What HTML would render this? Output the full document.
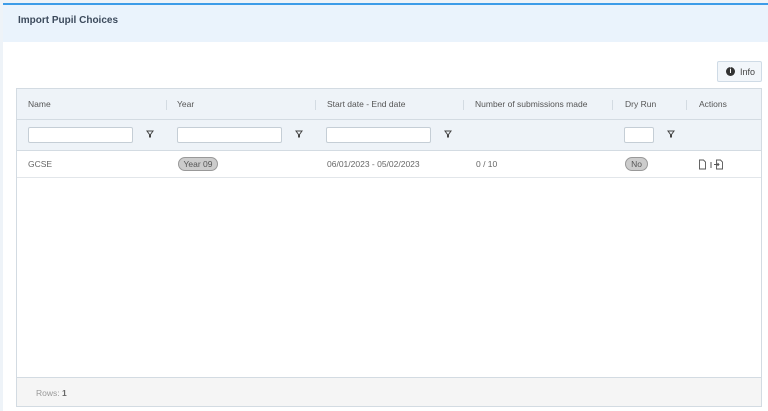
<!DOCTYPE html>
<html><head><style>
*{box-sizing:border-box;margin:0;padding:0}
body{width:768px;height:411px;background:#eef3f8;font-family:"Liberation Sans",sans-serif;position:relative;overflow:hidden}
.card{position:absolute;left:3px;top:3px;right:0;bottom:0;background:#fff;border-top:2px solid #3d9ce8}
.hd{height:37px;background:#eaf3fc;padding:10px 0 0 15px;font-size:10px;font-weight:bold;color:#3c4a5c}
.info{position:absolute;left:717px;top:61px;width:45px;height:21px;border:1px solid #cfdbe6;background:#f2f6fa;border-radius:2px;font-size:9px;color:#444;padding:5px 0 0 8px;line-height:10px}
.info b{display:inline-block;width:9px;height:9px;border-radius:50%;background:#333;color:#fff;font-size:7px;text-align:center;line-height:9px;margin-right:5px;vertical-align:top}
.tbl{position:absolute;left:16px;top:88px;width:746px;height:319px;border:1px solid #d3dbe2}
.th{position:absolute;left:0;top:0;width:100%;height:31px;background:#eef3f8;border-bottom:1px solid #d3dbe2}
.fr{position:absolute;left:0;top:31px;width:100%;height:31px;background:#eef3f8;border-bottom:1px solid #d3dbe2}
.row{position:absolute;left:0;top:62px;width:100%;height:27px;border-bottom:1px solid #e2e6ea}
.ft{position:absolute;left:0;bottom:0;width:100%;height:29px;background:#f5f5f5;border-top:1px solid #d3dbe2;font-size:8.5px;color:#999;padding:10px 0 0 19px}
.t{position:absolute;font-size:8.5px;color:#555}
.sep{position:absolute;top:11px;width:1px;height:10px;background:#d3dbe2}
.in{position:absolute;top:7px;height:16px;background:#fff;border:1px solid #c5ced6;border-radius:2px}
.fi{position:absolute;top:10px;font-size:8px;color:#555}
.pill{position:absolute;background:#ccc;border:1px solid #999;border-radius:8px;font-size:8.5px;color:#555;text-align:center;height:14px;line-height:12px}
</style></head><body>
<div class="card"><div class="hd">Import Pupil Choices</div></div>
<div class="info"><b>i</b>Info</div>
<div class="tbl">
<div class="th">
<div class="t" style="left:11px;top:10px">Name</div>
<div class="sep" style="left:149px"></div><div class="t" style="left:160px;top:10px">Year</div>
<div class="sep" style="left:298px"></div><div class="t" style="left:310px;top:10px">Start date - End date</div>
<div class="sep" style="left:446px"></div><div class="t" style="left:458px;top:10px">Number of submissions made</div>
<div class="sep" style="left:595px"></div><div class="t" style="left:608px;top:10px">Dry Run</div>
<div class="sep" style="left:669px"></div><div class="t" style="left:682px;top:10px">Actions</div>
<div class="sep" style="left:744px"></div>
</div>
<div class="fr">
<div class="in" style="left:11px;width:105px"></div><svg class="fi" style="left:129px" width="8" height="8" viewBox="0 0 8 8"><path d="M1 1h6L4.5 4.5V7H3.5V4.5z" fill="none" stroke="#444" stroke-width="1"/></svg>
<div class="in" style="left:160px;width:105px"></div><svg class="fi" style="left:278px" width="8" height="8" viewBox="0 0 8 8"><path d="M1 1h6L4.5 4.5V7H3.5V4.5z" fill="none" stroke="#444" stroke-width="1"/></svg>
<div class="in" style="left:309px;width:105px"></div><svg class="fi" style="left:427px" width="8" height="8" viewBox="0 0 8 8"><path d="M1 1h6L4.5 4.5V7H3.5V4.5z" fill="none" stroke="#444" stroke-width="1"/></svg>
<div class="in" style="left:607px;width:30px"></div><svg class="fi" style="left:650px" width="8" height="8" viewBox="0 0 8 8"><path d="M1 1h6L4.5 4.5V7H3.5V4.5z" fill="none" stroke="#444" stroke-width="1"/></svg>
</div>
<div class="row">
<div class="t" style="left:11px;top:8px;color:#666">GCSE</div>
<div class="pill" style="left:161px;top:6px;width:40px">Year 09</div>
<div class="t" style="left:310px;top:8px;color:#666">06/01/2023 - 05/02/2023</div>
<div class="t" style="left:459px;top:8px;color:#666">0 / 10</div>
<div class="pill" style="left:608px;top:6px;width:23px">No</div>
<svg style="position:absolute;left:681px;top:8px" width="30" height="11" viewBox="0 0 30 11"><path d="M1.5 1h4l2 2v7h-6z" fill="none" stroke="#555" stroke-width="0.9"/><path d="M13 3v6" stroke="#555" stroke-width="1"/><path d="M18.5 1h4l2 2v7h-6z M16 5.5h5 M19.5 4l1.5 1.5-1.5 1.5" fill="none" stroke="#555" stroke-width="0.9"/></svg>
</div>
<div class="ft">Rows: <b style="color:#666">1</b></div>
</div>
</body></html>
